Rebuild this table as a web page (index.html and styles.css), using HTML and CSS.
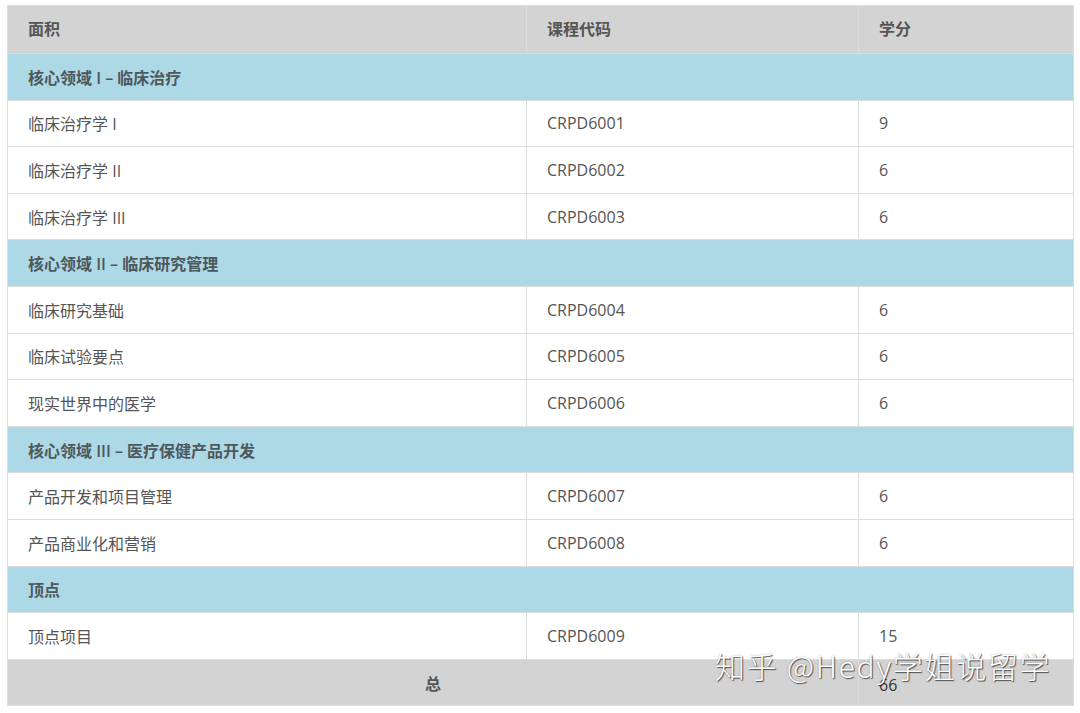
FILE: index.html
```html
<!DOCTYPE html>
<html lang="zh">
<head>
<meta charset="utf-8">
<link rel="stylesheet" href="styles.css">
</head>
<body>
<div class="wrap">
<table class="courses">
  <colgroup><col class="c1"><col class="c2"><col class="c3"></colgroup>
  <thead>
    <tr class="head"><th>面积</th><th>课程代码</th><th>学分</th></tr>
  </thead>
  <tbody>
    <tr class="sec"><td colspan="3">核心领域 I – 临床治疗</td></tr>
    <tr><td>临床治疗学 I</td><td>CRPD6001</td><td>9</td></tr>
    <tr><td>临床治疗学 II</td><td>CRPD6002</td><td>6</td></tr>
    <tr><td>临床治疗学 III</td><td>CRPD6003</td><td>6</td></tr>
    <tr class="sec"><td colspan="3">核心领域 II – 临床研究管理</td></tr>
    <tr><td>临床研究基础</td><td>CRPD6004</td><td>6</td></tr>
    <tr><td>临床试验要点</td><td>CRPD6005</td><td>6</td></tr>
    <tr><td>现实世界中的医学</td><td>CRPD6006</td><td>6</td></tr>
    <tr class="sec"><td colspan="3">核心领域 III – 医疗保健产品开发</td></tr>
    <tr><td>产品开发和项目管理</td><td>CRPD6007</td><td>6</td></tr>
    <tr><td>产品商业化和营销</td><td>CRPD6008</td><td>6</td></tr>
    <tr class="sec"><td colspan="3">顶点</td></tr>
    <tr><td>顶点项目</td><td>CRPD6009</td><td>15</td></tr>
    <tr class="total"><td colspan="2" class="center">总</td><td class="sum">66</td></tr>
  </tbody>
</table>
<div class="watermark">知乎 @Hedy学姐说留学</div>
</div>
</body>
</html>
```

FILE: styles.css
```css
html, body {
  margin: 0;
  padding: 0;
  background: #ffffff;
}
body {
  font-family: "Open Sans", "Noto Sans CJK SC", sans-serif;
  color: #555555;
}
.wrap {
  position: relative;
  padding: 5px 0 0 7px;
  width: 1066px;
}
.courses {
  border-collapse: collapse;
  width: 1066px;
  table-layout: fixed;
  font-size: 16px;
}
.c1 { width: 519px; }
.c2 { width: 332px; }
.c3 { width: 215px; }
.courses th,
.courses td {
  border: 1px solid #dddddd;
  height: 46.6px;
  padding: 0 0 0 20px;
  text-align: left;
  vertical-align: middle;
  box-sizing: border-box;
}
.courses th {
  height: 48px;
  padding-bottom: 3px;
  font-weight: 600;
  background: #d3d3d3;
  color: #555555;
}
.courses .sec td {
  background: #add8e6;
  font-weight: 600;
  color: #4d585c;
}
.courses .total td {
  background: #d3d3d3;
  font-weight: 600;
  color: #555555;
}
.courses .total td.sum {
  padding-top: 4px;
  font-weight: 400;
  color: #333333;
}
.courses .total td.center {
  text-align: center;
  padding: 0;
}
.watermark {
  position: absolute;
  left: 715px;
  top: 650px;
  font-family: "Noto Sans CJK SC", sans-serif;
  font-weight: 300;
  font-size: 30px;
  line-height: 30px;
  color: #ffffff;
  letter-spacing: 1.7px;
  text-shadow: 1px 1px 1px rgba(0,0,0,0.6), 0 0 2px rgba(0,0,0,0.3);
  white-space: nowrap;
}
```
